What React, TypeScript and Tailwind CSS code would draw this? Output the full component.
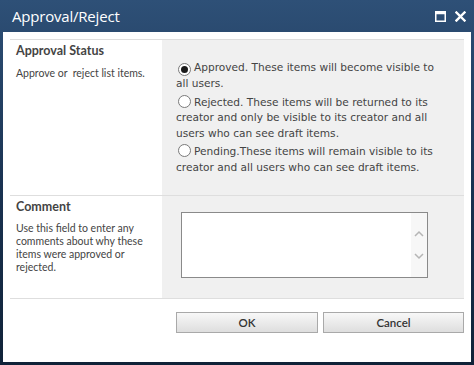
import React from 'react';

const options = [
  { id: 'approved', checked: true, text: 'Approved. These items will become visible to all users.' },
  { id: 'rejected', checked: false, text: 'Rejected. These items will be returned to its creator and only be visible to its creator and all users who can see draft items.' },
  { id: 'pending', checked: false, text: 'Pending.These items will remain visible to its creator and all users who can see draft items.' },
];

function Radio({ checked }: { checked: boolean }) {
  return (
    <span className="inline-flex items-center justify-center w-[13px] h-[13px] rounded-full border border-[#7a7a7a] bg-white align-[-2px] mr-[3px] ml-[2px]">
      {checked && <span className="w-[7px] h-[7px] rounded-full bg-[#1a1a1a]" />}
    </span>
  );
}

export default function App() {
  return (
    <div className="w-[474px] h-[365px] flex flex-col bg-gradient-to-b from-[#2e5077] via-[#1a3352] to-[#102238] overflow-hidden">
      {/* Title bar */}
      <div className="h-[32px] shrink-0 flex items-center justify-between pl-[12px] pr-[8px]">
        <span className="text-white text-[15px] font-['Open_Sans',sans-serif] tracking-[-0.2px]">Approval/Reject</span>
        <div className="flex items-center gap-[9px]">
          <svg width="11" height="11" viewBox="0 0 11 11">
            <rect x="0.75" y="0.75" width="9.5" height="9.5" fill="none" stroke="#fff" strokeWidth="1.5" />
            <rect x="0.75" y="0.75" width="9.5" height="2.5" fill="#fff" />
          </svg>
          <svg width="11" height="11" viewBox="0 0 11 11">
            <path d="M1.5 1.5 L9.5 9.5 M9.5 1.5 L1.5 9.5" stroke="#fff" strokeWidth="2.4" strokeLinecap="square" />
          </svg>
        </div>
      </div>

      {/* Body */}
      <div className="flex-1 mx-[3px] mb-[3px] bg-white px-[7px] pt-[7px] font-['Lato',sans-serif]">
        {/* Approval Status */}
        <div className="flex h-[156px] border-t border-[#dedede]">
          <div className="w-[152px] pl-[6px] pt-[3px]">
            <div className="text-[12.5px] leading-[16px] font-bold text-[#444]">Approval Status</div>
            <div className="mt-[8px] text-[10.5px] leading-[13px] text-[#444] whitespace-pre">Approve or  reject list items.</div>
          </div>
          <div className="flex-1 bg-[#f0f0f0] pl-[14px] pr-[18px] pt-[20px] font-['DejaVu_Sans',sans-serif] text-[10.6px] leading-[15.5px] text-[#444]">
            {options.map((o) => (
              <div key={o.id} className="mb-[3px]">
                <Radio checked={o.checked} />
                {o.text}
              </div>
            ))}
          </div>
        </div>

        {/* Comment */}
        <div className="flex h-[104px] border-t border-b border-[#dedede]">
          <div className="w-[152px] pl-[6px] pt-[3px] pr-[8px]">
            <div className="text-[12.5px] leading-[16px] font-bold text-[#444]">Comment</div>
            <div className="mt-[7px] text-[10.5px] leading-[13px] text-[#444]">
              Use this field to enter any<br />
              comments about why these<br />
              items were approved or<br />
              rejected.
            </div>
          </div>
          <div className="flex-1 bg-[#f0f0f0] pl-[19px] pt-[16px]">
            <div className="w-[247px] h-[66px] border border-[#8a8a8a] bg-white flex justify-end">
              <div className="w-[16px] bg-[#f7f7f7] flex flex-col items-center justify-center gap-[16px]">
                <svg width="10" height="7" viewBox="0 0 10 7">
                  <path d="M1 6 L5 2 L9 6" fill="none" stroke="#b5b5b5" strokeWidth="1.5" />
                </svg>
                <svg width="10" height="7" viewBox="0 0 10 7">
                  <path d="M1 1 L5 5 L9 1" fill="none" stroke="#b5b5b5" strokeWidth="1.5" />
                </svg>
              </div>
            </div>
          </div>
        </div>

        {/* Buttons */}
        <div className="flex justify-end gap-[5px] mt-[13px]">
          <button className="w-[142px] h-[21px] border border-[#a9a9a9] bg-gradient-to-b from-[#f8f8f8] to-[#dedede] text-[11.5px] text-[#333] font-semibold">
            OK
          </button>
          <button className="w-[141px] h-[21px] border border-[#a9a9a9] bg-gradient-to-b from-[#f8f8f8] to-[#dedede] text-[11.5px] text-[#333] font-semibold">
            Cancel
          </button>
        </div>
      </div>
    </div>
  );
}
